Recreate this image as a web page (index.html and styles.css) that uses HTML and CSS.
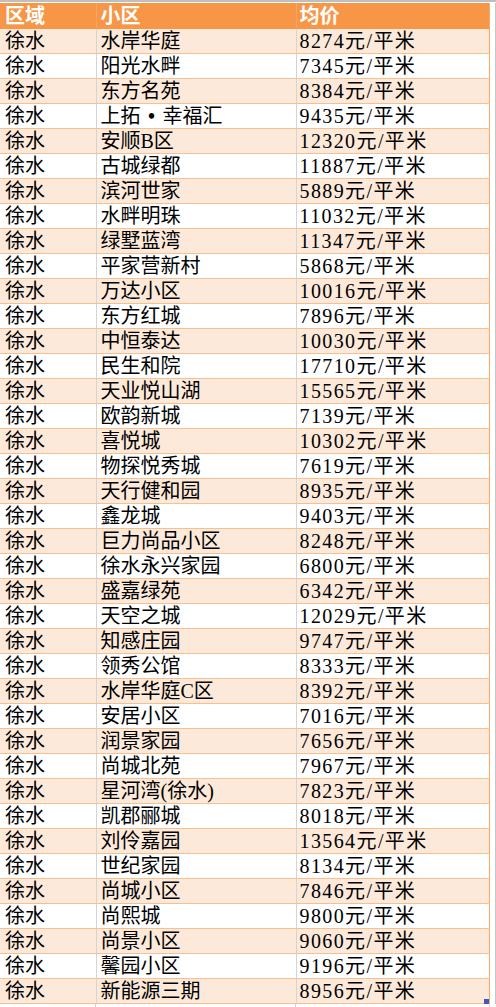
FILE: index.html
```html
<!DOCTYPE html>
<html lang="zh">
<head>
<meta charset="utf-8">
<title>徐水小区均价</title>
<link rel="stylesheet" href="styles.css">
</head>
<body>
<div class="topline"></div>
<div class="sheet">
  <div class="tablewrap">
    <table class="grid">
      <colgroup><col class="c1"><col class="c2"><col class="c3"></colgroup>
      <thead>
        <tr><th>区域</th><th>小区</th><th>均价</th></tr>
      </thead>
      <tbody>
        <tr><td>徐水</td><td>水岸华庭</td><td class="p">8274元/平米</td></tr>
        <tr><td>徐水</td><td>阳光水畔</td><td class="p">7345元/平米</td></tr>
        <tr><td>徐水</td><td>东方名苑</td><td class="p">8384元/平米</td></tr>
        <tr><td>徐水</td><td>上拓<span class="dot">•</span>幸福汇</td><td class="p">9435元/平米</td></tr>
        <tr><td>徐水</td><td>安顺B区</td><td class="p">12320元/平米</td></tr>
        <tr><td>徐水</td><td>古城绿都</td><td class="p">11887元/平米</td></tr>
        <tr><td>徐水</td><td>滨河世家</td><td class="p">5889元/平米</td></tr>
        <tr><td>徐水</td><td>水畔明珠</td><td class="p">11032元/平米</td></tr>
        <tr><td>徐水</td><td>绿墅蓝湾</td><td class="p">11347元/平米</td></tr>
        <tr><td>徐水</td><td>平家营新村</td><td class="p">5868元/平米</td></tr>
        <tr><td>徐水</td><td>万达小区</td><td class="p">10016元/平米</td></tr>
        <tr><td>徐水</td><td>东方红城</td><td class="p">7896元/平米</td></tr>
        <tr><td>徐水</td><td>中恒泰达</td><td class="p">10030元/平米</td></tr>
        <tr><td>徐水</td><td>民生和院</td><td class="p">17710元/平米</td></tr>
        <tr><td>徐水</td><td>天业悦山湖</td><td class="p">15565元/平米</td></tr>
        <tr><td>徐水</td><td>欧韵新城</td><td class="p">7139元/平米</td></tr>
        <tr><td>徐水</td><td>喜悦城</td><td class="p">10302元/平米</td></tr>
        <tr><td>徐水</td><td>物探悦秀城</td><td class="p">7619元/平米</td></tr>
        <tr><td>徐水</td><td>天行健和园</td><td class="p">8935元/平米</td></tr>
        <tr><td>徐水</td><td>鑫龙城</td><td class="p">9403元/平米</td></tr>
        <tr><td>徐水</td><td>巨力尚品小区</td><td class="p">8248元/平米</td></tr>
        <tr><td>徐水</td><td>徐水永兴家园</td><td class="p">6800元/平米</td></tr>
        <tr><td>徐水</td><td>盛嘉绿苑</td><td class="p">6342元/平米</td></tr>
        <tr><td>徐水</td><td>天空之城</td><td class="p">12029元/平米</td></tr>
        <tr><td>徐水</td><td>知感庄园</td><td class="p">9747元/平米</td></tr>
        <tr><td>徐水</td><td>领秀公馆</td><td class="p">8333元/平米</td></tr>
        <tr><td>徐水</td><td>水岸华庭C区</td><td class="p">8392元/平米</td></tr>
        <tr><td>徐水</td><td>安居小区</td><td class="p">7016元/平米</td></tr>
        <tr><td>徐水</td><td>润景家园</td><td class="p">7656元/平米</td></tr>
        <tr><td>徐水</td><td>尚城北苑</td><td class="p">7967元/平米</td></tr>
        <tr><td>徐水</td><td>星河湾(徐水)</td><td class="p">7823元/平米</td></tr>
        <tr><td>徐水</td><td>凯郡郦城</td><td class="p">8018元/平米</td></tr>
        <tr><td>徐水</td><td>刘伶嘉园</td><td class="p">13564元/平米</td></tr>
        <tr><td>徐水</td><td>世纪家园</td><td class="p">8134元/平米</td></tr>
        <tr><td>徐水</td><td>尚城小区</td><td class="p">7846元/平米</td></tr>
        <tr><td>徐水</td><td>尚熙城</td><td class="p">9800元/平米</td></tr>
        <tr><td>徐水</td><td>尚景小区</td><td class="p">9060元/平米</td></tr>
        <tr><td>徐水</td><td>馨园小区</td><td class="p">9196元/平米</td></tr>
        <tr><td>徐水</td><td>新能源三期</td><td class="p">8956元/平米</td></tr>
      </tbody>
    </table>
    <div class="handle"></div>
  </div>
  <div class="edge"></div>
</div>
<div class="below">
  <div class="b1"></div><div class="b2"></div><div class="b3"></div>
</div>
</body>
</html>
```

FILE: styles.css
```css
html, body {
  margin: 0;
  padding: 0;
  background: #ffffff;
}
body {
  font-family: "Liberation Serif", "Noto Sans CJK SC", serif;
  font-size: 20px;
  color: #000000;
}
.topline {
  height: 2px;
  background: #bfbfbf;
  margin-bottom: 1px;
}
.sheet {
  display: flex;
  align-items: stretch;
}
.tablewrap {
  position: relative;
  width: 490px;
}
.edge {
  width: 5px;
  border-right: 1px solid #c6c6c6;
}
.grid {
  border-collapse: collapse;
  table-layout: fixed;
  width: 489px;
  border-right: 1px solid #f8a86a;
}
.c1 { width: 96px; }
.c2 { width: 200px; }
.c3 { width: 193px; }
.grid th, .grid td {
  box-sizing: border-box;
  height: 25px;
  padding: 0;
  line-height: 24px;
  white-space: nowrap;
  text-align: left;
  vertical-align: middle;
}
.grid th {
  background: #f79646;
  color: #ffffff;
  font-family: "Noto Sans CJK SC", sans-serif;
  font-weight: bold;
  font-size: 20px;
  border-bottom: 1px solid #f79646;
  border-right: 1px solid #f9a566;
}
.grid td {
  border-bottom: 1px solid #fabf8f;
  border-right: 1px solid #d4d4d4;
}
.grid th:first-child, .grid td:first-child { padding-left: 5px; }
.grid th:nth-child(2), .grid td:nth-child(2) { padding-left: 4px; }
.grid th:nth-child(3), .grid td:nth-child(3) { padding-left: 3px; border-right: none; }
.grid tbody tr:nth-child(odd) td { background: #fde9d9; }
.grid tbody tr:nth-child(even) td { background: #ffffff; }
.p { letter-spacing: 1.4px; }
.dot {
  display: inline-block;
  width: 22px;
  text-align: center;
  font-weight: bold;
}
.handle {
  position: absolute;
  right: 1px;
  bottom: 0;
  width: 5px;
  height: 5px;
  background: #3a5cb8;
}
.below {
  display: flex;
  height: 10px;
}
.b1 { width: 95px; border-right: 1px solid #d4d4d4; }
.b2 { width: 199px; border-right: 1px solid #d4d4d4; }
.b3 { width: 193px; border-right: 1px solid #d4d4d4; }
```
